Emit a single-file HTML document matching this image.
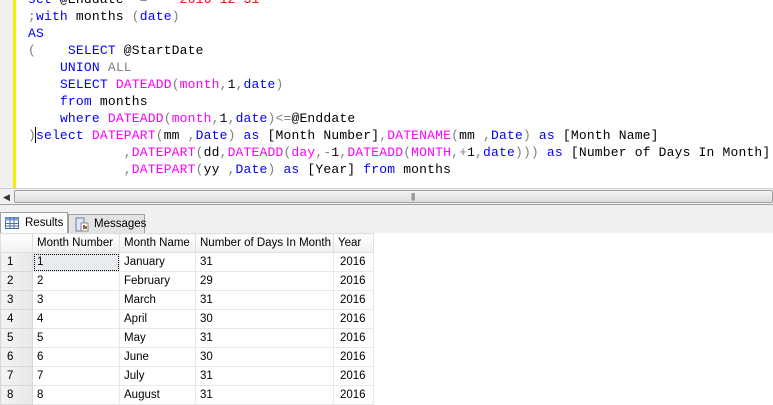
<!DOCTYPE html>
<html><head><meta charset="utf-8"><style>
*{margin:0;padding:0;box-sizing:border-box}
body{width:773px;height:405px;overflow:hidden;background:#fff;position:relative;font-family:"Liberation Sans",sans-serif}
#gut{position:absolute;left:0;top:0;width:13px;height:188px;background:#f0f0f0}
#ybar{position:absolute;left:13px;top:0;width:3px;height:188px;background:#f5f000}
#code{position:absolute;left:28px;top:-9px;font-family:"Liberation Mono",monospace;font-size:13px;line-height:17px;white-space:pre;color:#000;letter-spacing:0.18px}
.k{color:#0000ff}.f{color:#ff00ff}.g{color:#808080}.s{color:#ff0000}
#cur{position:absolute;left:35px;top:127px;width:1px;height:16px;background:#000}
#hs{position:absolute;left:0;top:188px;width:773px;height:16px;background:#f0f0f0;border-top:1px solid #d0d0d0}
#hs .a{position:absolute;left:3px;top:3px;font-size:9px;color:#333}
#hs .t{position:absolute;left:14px;top:1px;width:759px;height:13px;background:linear-gradient(#f4f4f4,#dcdcdc);border:1px solid #a0a0a0;border-radius:2px}
#hs .t span{position:absolute;left:396px;top:1px;font-size:8px;color:#666;letter-spacing:-1px}
#panel{position:absolute;left:0;top:204px;width:773px;height:29px;background:#f0f0f0;border-top:1px solid #a0a0a0}
.tab{position:absolute;font-size:11.5px;color:#000;border:1px solid #a0a0a0;border-bottom:none;white-space:nowrap}
#t1{left:0;top:7px;width:68px;height:22px;background:#fbfbfb;padding:4px 0 0 24px}
#t2{left:68px;top:9px;width:77px;height:20px;background:#e3e3e3;padding:3px 0 0 25px}
table{position:absolute;left:0;top:233px;border-collapse:collapse;font-size:11.5px;table-layout:fixed;width:373px}
td{height:19px;border:1px solid #e8e8e8;padding:0 4px;white-space:nowrap;overflow:hidden}
tr.h td{background:linear-gradient(#fff,#f0f0f0);border-color:#e0e0e0}
td.r{background:linear-gradient(90deg,#f4f4f4,#e8e8e8);border-color:#d8d8d8;padding-left:6px}
</style></head><body>
<div id="gut"></div><div id="ybar"></div>
<div id="code"><span class="k">set</span> @Enddate  <span class="g">=</span>   <span class="s">'2016-12-31'</span>
<span class="g">;</span><span class="k">with</span> months <span class="g">(</span><span class="k">date</span><span class="g">)</span>
<span class="k">AS</span>
<span class="g">(</span>    <span class="k">SELECT</span> @StartDate
    <span class="k">UNION</span> <span class="g">ALL</span>
    <span class="k">SELECT</span> <span class="f">DATEADD</span><span class="g">(</span><span class="f">month</span><span class="g">,</span>1<span class="g">,</span><span class="k">date</span><span class="g">)</span>
    <span class="k">from</span> months
    <span class="k">where</span> <span class="f">DATEADD</span><span class="g">(</span><span class="f">month</span><span class="g">,</span>1<span class="g">,</span><span class="k">date</span><span class="g">)&lt;=</span>@Enddate
<span class="g">)</span><span class="k">select</span> <span class="f">DATEPART</span><span class="g">(</span>mm <span class="g">,</span><span class="k">Date</span><span class="g">)</span> <span class="k">as</span> [Month Number]<span class="g">,</span><span class="f">DATENAME</span><span class="g">(</span>mm <span class="g">,</span><span class="k">Date</span><span class="g">)</span> <span class="k">as</span> [Month Name]
            <span class="g">,</span><span class="f">DATEPART</span><span class="g">(</span>dd<span class="g">,</span><span class="f">DATEADD</span><span class="g">(</span><span class="f">day</span><span class="g">,-</span>1<span class="g">,</span><span class="f">DATEADD</span><span class="g">(</span><span class="f">MONTH</span><span class="g">,+</span>1<span class="g">,</span><span class="k">date</span><span class="g">)))</span> <span class="k">as</span> [Number of Days In Month]
            <span class="g">,</span><span class="f">DATEPART</span><span class="g">(</span>yy <span class="g">,</span><span class="k">Date</span><span class="g">)</span> <span class="k">as</span> [Year] <span class="k">from</span> months</div>
<div id="cur"></div>
<div id="hs"><span class="a">◀</span><div class="t"><span>|||</span></div></div>
<div id="panel">
<div class="tab" id="t1"><svg style="position:absolute;left:4px;top:4px" width="14" height="12"><rect x="0.5" y="0.5" width="13" height="11" fill="#fff" stroke="#4a6fa5"/><rect x="0.5" y="0.5" width="13" height="3" fill="#7fa0d0"/><path d="M5 0v12M9 0v12M0 6.5h14M0 9h14" stroke="#4a6fa5" stroke-width="1"/></svg>Results</div>
<div class="tab" id="t2"><svg style="position:absolute;left:6px;top:2px" width="14" height="15"><rect x="1" y="1" width="8" height="13" fill="#dde8f5" stroke="#6080a0"/><rect x="6" y="6" width="7" height="8" fill="#fff" stroke="#888"/><rect x="8" y="8" width="2" height="4" fill="#e04040"/><rect x="10" y="9" width="2" height="3" fill="#40a040"/></svg>Messages</div>
</div>
<table>
<colgroup><col style="width:32px"><col style="width:87px"><col style="width:76px"><col style="width:138px"><col style="width:40px"></colgroup>
<tr class="h"><td></td><td>Month Number</td><td>Month Name</td><td>Number of Days In Month</td><td>Year</td></tr>
<tr><td class="r">1</td><td style="background:#e8ecf0;outline:1px dotted #000;outline-offset:-2px">1</td><td>January</td><td>31</td><td style="padding-left:6px">2016</td></tr>
<tr><td class="r">2</td><td>2</td><td>February</td><td>29</td><td style="padding-left:6px">2016</td></tr>
<tr><td class="r">3</td><td>3</td><td>March</td><td>31</td><td style="padding-left:6px">2016</td></tr>
<tr><td class="r">4</td><td>4</td><td>April</td><td>30</td><td style="padding-left:6px">2016</td></tr>
<tr><td class="r">5</td><td>5</td><td>May</td><td>31</td><td style="padding-left:6px">2016</td></tr>
<tr><td class="r">6</td><td>6</td><td>June</td><td>30</td><td style="padding-left:6px">2016</td></tr>
<tr><td class="r">7</td><td>7</td><td>July</td><td>31</td><td style="padding-left:6px">2016</td></tr>
<tr><td class="r">8</td><td>8</td><td>August</td><td>31</td><td style="padding-left:6px">2016</td></tr>
</table>
</body></html>
